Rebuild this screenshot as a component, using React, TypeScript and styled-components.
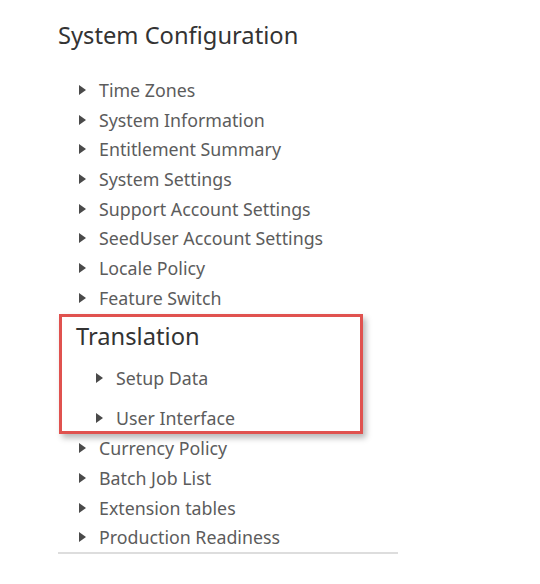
import React from 'react';
import styled, { createGlobalStyle } from 'styled-components';

const GlobalStyle = createGlobalStyle`
  body {
    margin: 0;
    background: #ffffff;
    font-family: 'Noto Sans', 'Open Sans', sans-serif;
  }
`;

const topItems = [
  'Time Zones',
  'System Information',
  'Entitlement Summary',
  'System Settings',
  'Support Account Settings',
  'SeedUser Account Settings',
  'Locale Policy',
  'Feature Switch',
];

const bottomItems = [
  'Currency Policy',
  'Batch Job List',
  'Extension tables',
  'Production Readiness',
];

const App = () => (
  <>
    <GlobalStyle />
    <Page>
      <Title>System Configuration</Title>
      <List>
        {topItems.map((item) => (
          <Item key={item}>
            <Caret />
            {item}
          </Item>
        ))}
      </List>
      <Highlight>
        <SectionTitle>Translation</SectionTitle>
        <SubList>
          <SubItem>
            <Caret />
            Setup Data
          </SubItem>
          <SubItem>
            <Caret />
            User Interface
          </SubItem>
        </SubList>
      </Highlight>
      <List>
        {bottomItems.map((item) => (
          <Item key={item}>
            <Caret />
            {item}
          </Item>
        ))}
      </List>
      <Divider />
    </Page>
  </>
);

export default App;

const Page = styled.div`
  width: 340px;
  padding: 18px 0 0 58px;
`;

const Title = styled.h1`
  margin: 0 0 23px;
  font-size: 23.7px;
  font-weight: 400;
  line-height: 34px;
  color: #333333;
`;

const List = styled.ul`
  margin: 0;
  padding: 0 0 0 21px;
  list-style: none;
`;

const Item = styled.li`
  display: flex;
  align-items: center;
  height: 29.7px;
  font-size: 17.8px;
  color: #5c5c5c;
`;

const Caret = styled.span`
  width: 0;
  height: 0;
  margin-right: 13px;
  border-top: 5px solid transparent;
  border-bottom: 5px solid transparent;
  border-left: 7px solid #4a4a4a;
`;

const Highlight = styled.div`
  box-sizing: border-box;
  width: 304px;
  height: 120px;
  margin: 1.5px 0 -0.5px 1px;
  padding: 2.5px 0 0 14px;
  border: 3.5px solid #e0524f;
  box-shadow: 3px 4px 6px rgba(0, 0, 0, 0.28);
`;

const SectionTitle = styled.div`
  font-size: 23.7px;
  line-height: 32px;
  color: #333333;
`;

const SubList = styled.ul`
  margin: 7px 0 0;
  padding: 0 0 0 20px;
  list-style: none;
`;

const SubItem = styled(Item)`
  height: 39.5px;
`;

const Divider = styled.div`
  width: 340px;
  height: 2px;
  background: #dddddd;
`;
